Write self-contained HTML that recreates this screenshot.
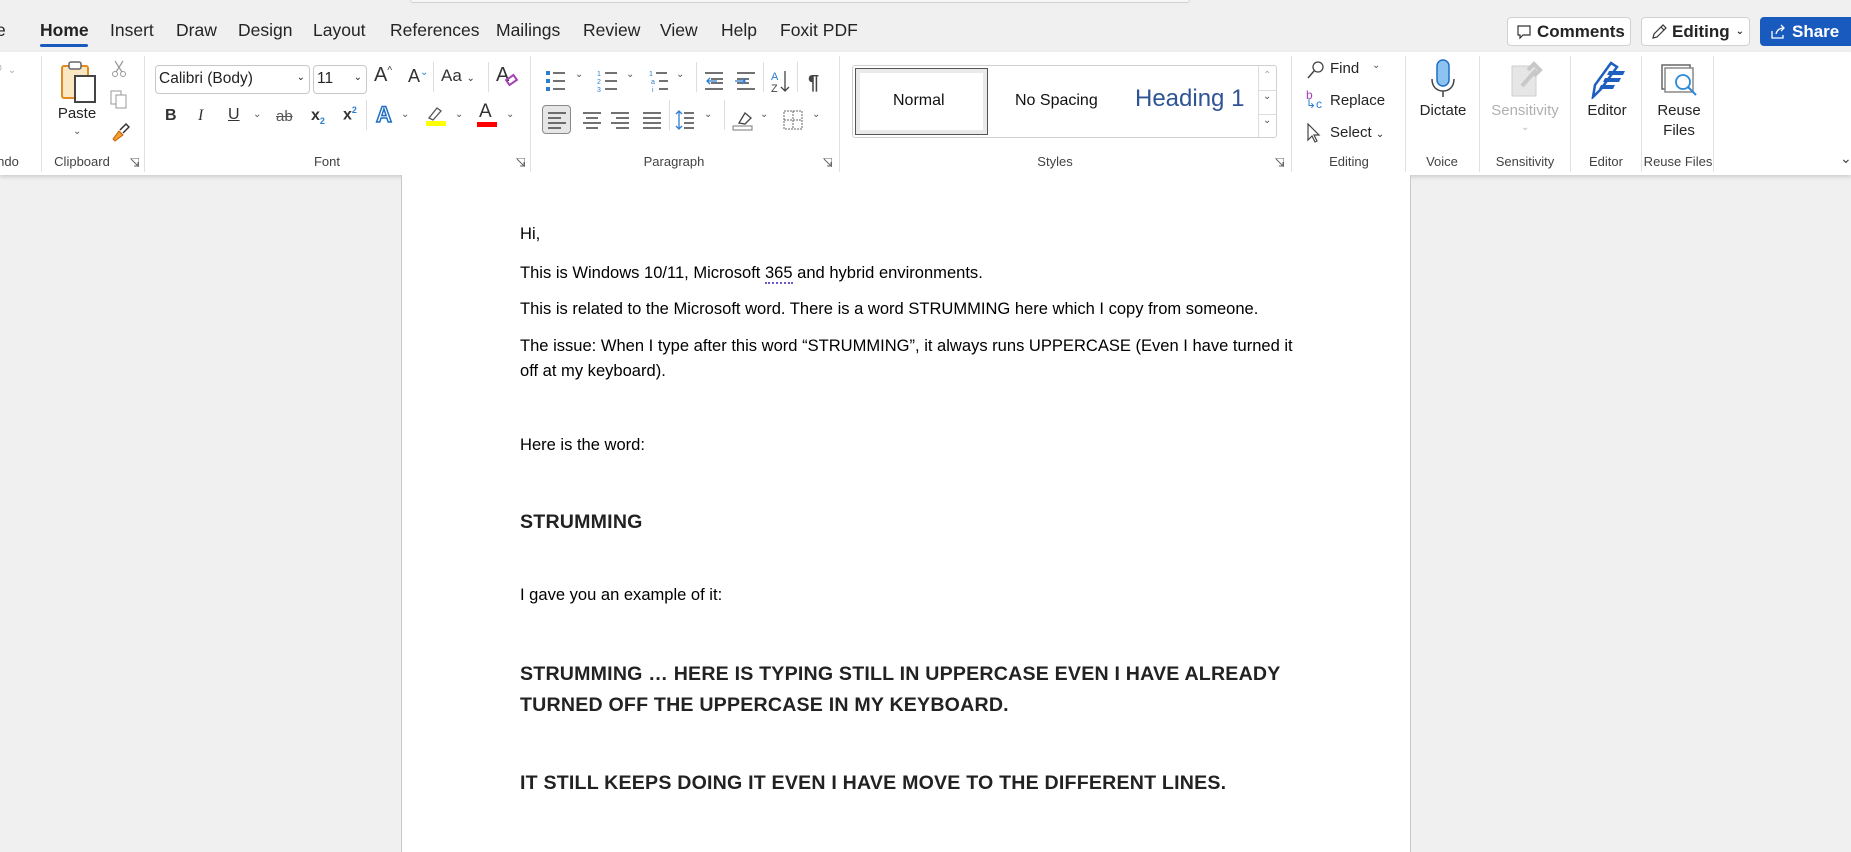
<!DOCTYPE html>
<html><head><meta charset="utf-8">
<style>
*{margin:0;padding:0;box-sizing:border-box}
body{width:1851px;height:852px;overflow:hidden;background:#f0f0f0;font-family:"Segoe UI","Liberation Sans","DejaVu Sans",sans-serif;color:#242424;position:relative}
.a{position:absolute;white-space:nowrap}
.tab{position:absolute;top:20px;font-size:17.5px;color:#242424}
.ribbon{position:absolute;left:0;top:52px;width:1851px;height:123px;background:#fff;box-shadow:0 2px 4px rgba(0,0,0,.15)}
.sep{position:absolute;top:4px;width:1px;height:116px;background:#e1e1e1}
.gl{position:absolute;top:102px;font-size:13px;color:#424242;transform:translateX(-50%)}
.chev{position:absolute;font-size:10px;color:#555}
.doc{position:absolute;left:401px;top:175px;width:1010px;height:677px;background:#fff;border-left:1px solid #c8c8c8;border-right:1px solid #c8c8c8}
.p{position:absolute;left:118px;font-family:"Liberation Sans",sans-serif;font-size:16.55px;color:#000;white-space:nowrap}
.b{position:absolute;left:118px;font-family:"Liberation Sans",sans-serif;font-weight:bold;font-size:19.6px;color:#222;white-space:nowrap;letter-spacing:0.2px}
.btn{position:absolute;top:17px;height:29px;border:1px solid #d1d1d1;border-radius:4px;background:#fff;font-size:17px;font-weight:600;display:flex;align-items:center;padding-left:8px}
.lbl{position:absolute;font-size:15px;color:#242424;transform:translateX(-50%);text-align:center;line-height:20px}
</style></head><body>
<div class="tab" style="left:-4px">e</div>
<div class="tab" style="left:40px;font-weight:600">Home</div>
<div class="a" style="left:40px;top:44px;width:48px;height:3px;background:#185abd;border-radius:2px"></div>
<div class="tab" style="left:110px">Insert</div>
<div class="tab" style="left:176px">Draw</div>
<div class="tab" style="left:238px">Design</div>
<div class="tab" style="left:313px">Layout</div>
<div class="tab" style="left:390px">References</div>
<div class="tab" style="left:496px">Mailings</div>
<div class="tab" style="left:583px">Review</div>
<div class="tab" style="left:660px">View</div>
<div class="tab" style="left:721px">Help</div>
<div class="tab" style="left:780px">Foxit PDF</div>
<div class="a" style="left:410px;top:0;width:780px;height:3px;border-bottom:1px solid #d0d0d0;border-left:1px solid #d0d0d0;border-right:1px solid #d0d0d0;border-radius:0 0 4px 4px;background:#f7f7f7"></div>

<div class="btn" style="left:1507px;width:124px"><svg width="16" height="16" viewBox="0 0 16 16"><path d="M2 2h12v9H7l-3 3v-3H2z" fill="none" stroke="#333" stroke-width="1.2"/></svg><span style="margin-left:5px">Comments</span></div>
<div class="btn" style="left:1641px;width:109px"><svg width="18" height="18" viewBox="0 0 18 18"><path d="M3 15l1-4 9-9 3 3-9 9z M11 4l3 3" fill="none" stroke="#333" stroke-width="1.2"/></svg><span style="margin-left:4px">Editing</span><span style="font-size:10px;margin-left:6px">&#8964;</span></div>
<div class="btn" style="left:1760px;width:100px;background:#185abd;border-color:#185abd;color:#fff"><svg width="18" height="18" viewBox="0 0 18 18"><path d="M3 8v7h11v-3 M7 11c1-4 4-6 8-6 M12 2l3 3-3 3" fill="none" stroke="#fff" stroke-width="1.3"/></svg><span style="margin-left:5px">Share</span></div>

<div class="ribbon">
 <div class="a" style="left:-8px;top:5px;font-size:18px;color:#aaa">○ <span style="font-size:10px">&#8964;</span></div>
 <div class="a" style="left:-8px;top:30px;font-size:22px;color:#444">)</div>
 <div class="gl" style="left:8px">ndo</div>
 <div class="sep" style="left:41px"></div>
 <svg class="a" style="left:60px;top:8px" width="40" height="46" viewBox="0 0 40 46"><rect x="2" y="6" width="26" height="32" rx="2" fill="#fce7c3" stroke="#e28a1e" stroke-width="2"/><rect x="9" y="2" width="12" height="7" rx="2" fill="#fff" stroke="#666" stroke-width="1.5"/><rect x="15" y="16" width="20" height="26" fill="#fff" stroke="#444" stroke-width="2"/></svg>
 <div class="lbl" style="left:77px;top:52px">Paste</div>
 <div class="chev" style="left:73px;top:74px">&#8964;</div>
 <svg class="a" style="left:110px;top:8px" width="18" height="18" viewBox="0 0 18 18"><path d="M5 1l7 11 M13 1L6 12" stroke="#999" stroke-width="1.2" fill="none"/><circle cx="5" cy="14" r="2.5" fill="none" stroke="#999"/><circle cx="13" cy="14" r="2.5" fill="none" stroke="#999"/></svg>
 <svg class="a" style="left:110px;top:38px" width="18" height="20" viewBox="0 0 18 20"><rect x="1" y="1" width="10" height="13" fill="none" stroke="#999"/><rect x="6" y="5" width="10" height="13" fill="#fff" stroke="#999"/></svg>
 <svg class="a" style="left:110px;top:70px" width="20" height="20" viewBox="0 0 20 20"><path d="M3 17l6-8 4 4-8 6z" fill="#f0a030" stroke="#c85a00"/><path d="M10 8l6-6 3 3-6 6" fill="none" stroke="#333" stroke-width="1.5"/></svg>
 <div class="gl" style="left:82px">Clipboard</div>
 <svg class="a" style="left:130px;top:106px" width="9" height="9"><path d="M0 0h9v9 M1 1l7 7 M4 8h4V4" fill="none" stroke="#666"/></svg>
 <div class="sep" style="left:144px"></div>
 <div class="a" style="left:155px;top:13px;width:155px;height:29px;border:1px solid #c8c8c8;border-radius:4px;font-size:15.5px;padding:4px 3px;color:#222">Calibri (Body)<span style="position:absolute;right:4px;top:6px;font-size:10px">&#8964;</span></div>
 <div class="a" style="left:313px;top:13px;width:54px;height:29px;border:1px solid #c8c8c8;border-radius:4px;font-size:15.5px;padding:4px 3px">11<span style="position:absolute;right:4px;top:6px;font-size:10px">&#8964;</span></div>
 <div class="a" style="left:374px;top:12px;font-size:20px;color:#333">A<sup style="font-size:10px">^</sup></div>
 <div class="a" style="left:408px;top:14px;font-size:18px;color:#333">A<sup style="font-size:10px;color:#2b7cd3">&#8964;</sup></div>
 <div class="a" style="left:433px;top:10px;width:1px;height:30px;background:#ddd"></div>
 <div class="a" style="left:441px;top:14px;font-size:17px;color:#333">Aa <span style="font-size:10px">&#8964;</span></div>
 <div class="a" style="left:488px;top:10px;width:1px;height:30px;background:#ddd"></div>
 <div class="a" style="left:496px;top:12px;font-size:20px;color:#333">A</div>
 <div class="a" style="left:506px;top:24px;width:11px;height:8px;border:2px solid #a53fb5;transform:rotate(-35deg)"></div>
 <div class="a" style="left:165px;top:55px;font-size:16px;font-weight:bold;color:#333">B</div>
 <div class="a" style="left:198px;top:55px;font-size:16px;font-style:italic;font-family:'Liberation Serif',serif;color:#333">I</div>
 <div class="a" style="left:228px;top:54px;font-size:16px;text-decoration:underline;color:#333">U</div>
 <div class="chev" style="left:253px;top:57px">&#8964;</div>
 <div class="a" style="left:276px;top:56px;font-size:15px;text-decoration:line-through;color:#555">ab</div>
 <div class="a" style="left:311px;top:55px;font-size:16px;font-weight:600;color:#333">x<sub style="font-size:9px;color:#2b7cd3">2</sub></div>
 <div class="a" style="left:343px;top:53px;font-size:16px;font-weight:600;color:#333">x<sup style="font-size:9px;color:#2b7cd3">2</sup></div>
 <div class="a" style="left:366px;top:48px;width:1px;height:30px;background:#ddd"></div>
 <div class="a" style="left:376px;top:50px;font-size:22px;font-weight:bold;color:#fff;-webkit-text-stroke:1.5px #1f6fc4">A</div>
 <div class="chev" style="left:401px;top:57px">&#8964;</div>
 <svg class="a" style="left:425px;top:52px" width="22" height="22" viewBox="0 0 22 22"><path d="M4 14l8-10 4 3-8 9z" fill="none" stroke="#555" stroke-width="1.3"/><rect x="1" y="17" width="20" height="5" fill="#ffff00"/></svg>
 <div class="chev" style="left:455px;top:57px">&#8964;</div>
 <div class="a" style="left:479px;top:49px;font-size:19px;color:#333">A</div>
 <div class="a" style="left:477px;top:70px;width:20px;height:5px;background:#f00"></div>
 <div class="chev" style="left:506px;top:57px">&#8964;</div>
 <div class="gl" style="left:327px">Font</div>
 <svg class="a" style="left:516px;top:106px" width="9" height="9"><path d="M0 0h9v9 M1 1l7 7 M4 8h4V4" fill="none" stroke="#666"/></svg>
 <div class="sep" style="left:530px"></div>
 <svg class="a" style="left:545px;top:17px" width="280" height="24" viewBox="0 0 280 24">
  <g fill="#2b7cd3"><rect x="1" y="2" width="4" height="4"/><rect x="1" y="10" width="4" height="4"/><rect x="1" y="18" width="4" height="4"/></g>
  <g stroke="#444" stroke-width="1.5"><path d="M8 4h12M8 12h12M8 20h12"/><path d="M60 4h12M60 12h12M60 20h12"/><path d="M111 4h11M114 12h9M114 20h9"/><path d="M160 4h18M166 10h12M166 14h12M160 20h18"/><path d="M192 4h18M192 10h12M192 14h12M192 20h18"/></g>
  <g fill="#2b7cd3" font-size="7" font-family="Liberation Sans"><text x="52" y="7">1</text><text x="52" y="15">2</text><text x="52" y="23">3</text><text x="104" y="7">1</text><text x="106" y="15">a</text><text x="107" y="23">i</text></g>
  <path d="M172 12h-10M165 9l-3 3 3 3" stroke="#2b7cd3" stroke-width="1.3" fill="none"/>
  <path d="M190 12h10M197 9l3 3-3 3" stroke="#2b7cd3" stroke-width="1.3" fill="none"/>
  <text x="226" y="11" font-size="11" fill="#2b7cd3" font-family="Liberation Sans">A</text><text x="226" y="23" font-size="11" fill="#444" font-family="Liberation Sans">Z</text><path d="M240 2v20M236 18l4 4 4-4" stroke="#444" fill="none" stroke-width="1.3"/>
  <text x="263" y="20" font-size="20" fill="#444" font-family="Liberation Sans" font-weight="bold">¶</text>
 </svg>
 <div class="chev" style="left:575px;top:17px">&#8964;</div>
 <div class="chev" style="left:626px;top:17px">&#8964;</div>
 <div class="chev" style="left:676px;top:17px">&#8964;</div>
 <div class="a" style="left:696px;top:10px;width:1px;height:30px;background:#ddd"></div>
 <div class="a" style="left:763px;top:10px;width:1px;height:30px;background:#ddd"></div>
 <div class="a" style="left:797px;top:10px;width:1px;height:30px;background:#ddd"></div>
 <div class="a" style="left:542px;top:53px;width:29px;height:29px;border:1px solid #8a8a8a;border-radius:4px;background:#e6e6e6"></div>
 <svg class="a" style="left:546px;top:57px" width="280" height="22" viewBox="0 0 280 22">
  <g stroke="#444" stroke-width="1.5"><path d="M2 4h18M2 9h13M2 14h18M2 19h13"/><path d="M37 4h18M40 9h12M37 14h18M40 19h12"/><path d="M65 4h18M70 9h13M65 14h18M70 19h13"/><path d="M97 4h18M97 9h18M97 14h18M97 19h18"/><path d="M138 4h10M138 9h10M138 14h10M138 19h10"/></g>
  <path d="M133 2v18M130 5l3-3 3 3M130 17l3 3 3-3" stroke="#2b7cd3" fill="none" stroke-width="1.3"/>
  <path d="M193 14l6-10 6 5-6 6z" fill="none" stroke="#444" stroke-width="1.3"/><rect x="187" y="17" width="19" height="4" fill="#fff" stroke="#777"/>
  <rect x="238" y="2" width="18" height="18" fill="none" stroke="#666" stroke-dasharray="2 1"/><path d="M247 2v18M238 11h18" stroke="#666" stroke-dasharray="2 1"/>
 </svg>
 <div class="chev" style="left:704px;top:57px">&#8964;</div>
 <div class="a" style="left:669px;top:48px;width:1px;height:30px;background:#ddd"></div>
 <div class="a" style="left:724px;top:48px;width:1px;height:30px;background:#ddd"></div>
 <div class="chev" style="left:760px;top:57px">&#8964;</div>
 <div class="chev" style="left:812px;top:57px">&#8964;</div>
 <div class="gl" style="left:674px">Paragraph</div>
 <svg class="a" style="left:823px;top:106px" width="9" height="9"><path d="M0 0h9v9 M1 1l7 7 M4 8h4V4" fill="none" stroke="#666"/></svg>
 <div class="sep" style="left:839px"></div>
 <div class="a" style="left:852px;top:13px;width:425px;height:73px;border:1px solid #d0d0d0;border-radius:3px"></div>
 <div class="a" style="left:855px;top:16px;width:133px;height:67px;border:1px solid #555;outline:4px solid #eaeaea;outline-offset:-5px"></div>
 <div class="a" style="left:893px;top:40px;font-size:16px;color:#111">Normal</div>
 <div class="a" style="left:1015px;top:40px;font-size:16px;color:#111">No Spacing</div>
 <div class="a" style="left:1135px;top:33px;font-size:24px;color:#2f5496">Heading 1</div>
 <div class="a" style="left:1258px;top:14px;width:1px;height:71px;background:#ddd"></div>
 <div class="a" style="left:1258px;top:38px;width:19px;height:1px;background:#ddd"></div>
 <div class="a" style="left:1258px;top:62px;width:19px;height:1px;background:#ddd"></div>
 <div class="chev" style="left:1263px;top:18px;color:#aaa">&#8963;</div>
 <div class="chev" style="left:1263px;top:39px">&#8964;</div>
 <div class="chev" style="left:1263px;top:63px">&#8964;</div>
 <div class="gl" style="left:1055px">Styles</div>
 <svg class="a" style="left:1275px;top:106px" width="9" height="9"><path d="M0 0h9v9 M1 1l7 7 M4 8h4V4" fill="none" stroke="#666"/></svg>
 <div class="sep" style="left:1291px"></div>
 <svg class="a" style="left:1306px;top:8px" width="20" height="20" viewBox="0 0 20 20"><circle cx="12" cy="7" r="5" fill="none" stroke="#444" stroke-width="1.3"/><path d="M8 11l-6 7" stroke="#444" stroke-width="1.5"/></svg>
 <div class="a" style="left:1330px;top:8px;font-size:15px">Find</div>
 <div class="chev" style="left:1372px;top:8px">&#8964;</div>
 <div class="a" style="left:1306px;top:39px;font-size:12px;color:#a53fb5;line-height:9px">b<br><span style="color:#2b7cd3">&#8627;c</span></div>
 <div class="a" style="left:1330px;top:40px;font-size:15px">Replace</div>
 <svg class="a" style="left:1306px;top:71px" width="16" height="20" viewBox="0 0 16 20"><path d="M2 1v16l4-4 3 6 2-1-3-6h5z" fill="#fff" stroke="#444" stroke-width="1.2"/></svg>
 <div class="a" style="left:1330px;top:72px;font-size:15px">Select <span style="font-size:10px">&#8964;</span></div>
 <div class="gl" style="left:1349px">Editing</div>
 <div class="sep" style="left:1405px"></div>
 <svg class="a" style="left:1428px;top:7px" width="30" height="40" viewBox="0 0 30 40"><rect x="9" y="1" width="12" height="26" rx="6" fill="#8cc3f0" stroke="#1f6fc4" stroke-width="1.5"/><path d="M4 20c0 8 5 12 11 12s11-4 11-12 M15 32v6" fill="none" stroke="#444" stroke-width="1.5"/></svg>
 <div class="lbl" style="left:1443px;top:49px">Dictate</div>
 <div class="gl" style="left:1442px">Voice</div>
 <div class="sep" style="left:1479px"></div>
 <svg class="a" style="left:1510px;top:8px" width="34" height="38" viewBox="0 0 34 38"><rect x="2" y="6" width="24" height="30" fill="#e6e6e6" stroke="#cfcfcf"/><path d="M12 26l14-16 M18 10l6-6 6 6-6 6" stroke="#c8c8c8" stroke-width="4" fill="none"/></svg>
 <div class="lbl" style="left:1525px;top:49px;color:#b0b0b0">Sensitivity</div>
 <div class="chev" style="left:1521px;top:70px;color:#bbb">&#8964;</div>
 <div class="gl" style="left:1525px">Sensitivity</div>
 <div class="sep" style="left:1570px"></div>
 <svg class="a" style="left:1587px;top:7px" width="40" height="40" viewBox="0 0 40 40"><path d="M6 38l2-12 16-22 6 4-16 22z" fill="#fff" stroke="#1f5fc0" stroke-width="2.5"/><path d="M22 12h16l-2 4H20zM18 19h16l-2 4H16zM14 26h14l-2 4H12z" fill="#1f5fc0"/></svg>
 <div class="lbl" style="left:1607px;top:49px">Editor</div>
 <div class="gl" style="left:1606px">Editor</div>
 <div class="sep" style="left:1641px"></div>
 <svg class="a" style="left:1661px;top:12px" width="40" height="36" viewBox="0 0 40 36"><rect x="1" y="1" width="28" height="24" fill="none" stroke="#666" stroke-width="1.5"/><rect x="4" y="4" width="28" height="24" fill="#fff" stroke="#888" stroke-width="1.5"/><circle cx="22" cy="18" r="7" fill="none" stroke="#2b8ad8" stroke-width="1.8"/><path d="M27 23l8 8" stroke="#2b8ad8" stroke-width="2"/></svg>
 <div class="lbl" style="left:1679px;top:49px">Reuse<br>Files</div>
 <div class="gl" style="left:1678px">Reuse Files</div>
 <div class="sep" style="left:1713px"></div>
 <div class="a" style="left:1840px;top:98px;font-size:14px;color:#444">&#8964;</div>
</div>

<div class="doc">
 <div class="p" style="top:49px">Hi,</div>
 <div class="p" style="top:88px">This is Windows 10/11, Microsoft <span style="border-bottom:2px dotted #6a5acd">365</span> and hybrid environments.</div>
 <div class="p" style="top:124px">This is related to the Microsoft word. There is a word STRUMMING here which I copy from someone.</div>
 <div class="p" style="top:161px">The issue: When I type after this word “STRUMMING”, it always runs UPPERCASE (Even I have turned it</div>
 <div class="p" style="top:186px">off at my keyboard).</div>
 <div class="p" style="top:260px">Here is the word:</div>
 <div class="b" style="top:336px">STRUMMING</div>
 <div class="p" style="top:410px">I gave you an example of it:</div>
 <div class="b" style="top:488px">STRUMMING … HERE IS TYPING STILL IN UPPERCASE EVEN I HAVE ALREADY</div>
 <div class="b" style="top:519px">TURNED OFF THE UPPERCASE IN MY KEYBOARD.</div>
 <div class="b" style="top:597px">IT STILL KEEPS DOING IT EVEN I HAVE MOVE TO THE DIFFERENT LINES.</div>
</div>
</body></html>
